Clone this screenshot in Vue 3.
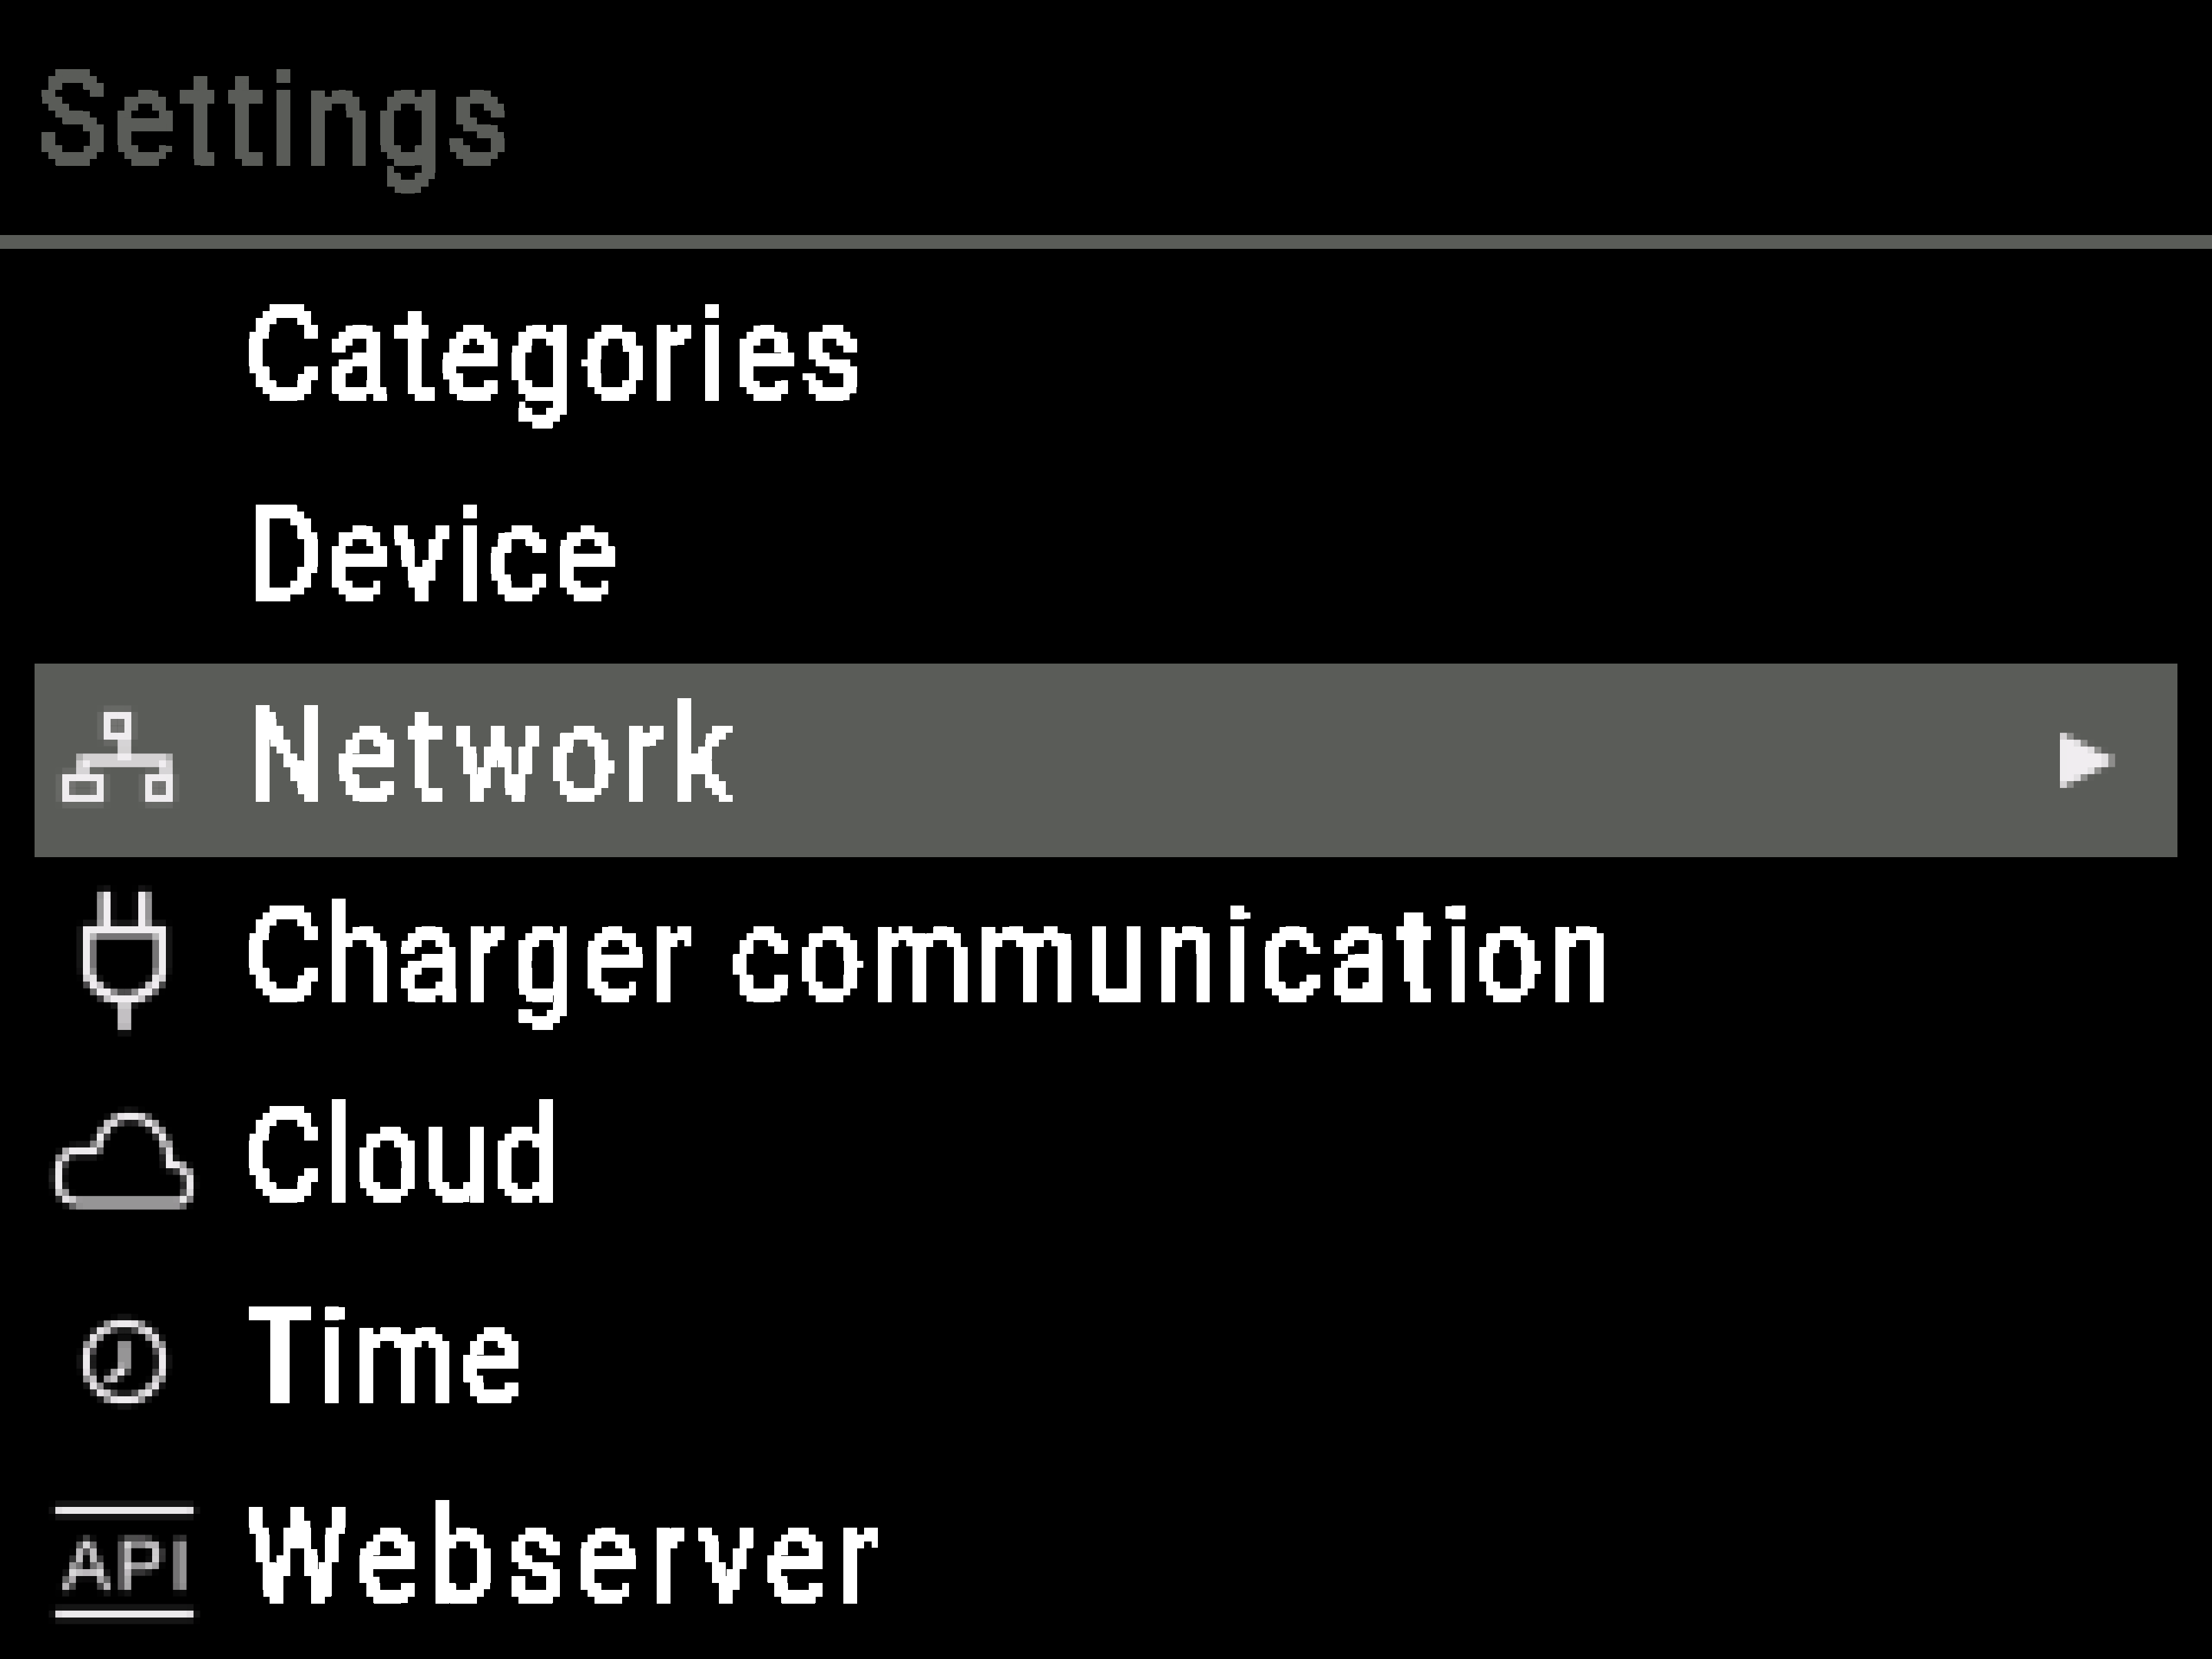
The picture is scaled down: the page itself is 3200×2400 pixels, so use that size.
<template>
  <div class="screen">
    <!-- the panel is a 320x240 LCD drawn 10x, these filters snap everything to its pixels -->
    <svg class="defs" width="0" height="0" aria-hidden="true">
      <filter id="lcd" x="0" y="0" width="100%" height="100%" color-interpolation-filters="sRGB">
        <feFlood x="4" y="4" width="2" height="2" flood-color="#000" />
        <feComposite width="10" height="10" />
        <feTile result="grid" />
        <feComposite in="SourceGraphic" in2="grid" operator="in" />
        <feMorphology operator="dilate" radius="4" />
        <feComponentTransfer>
          <feFuncA type="discrete" tableValues="0 1" />
        </feComponentTransfer>
      </filter>
      <filter id="lcd-soft" x="0" y="0" width="100%" height="100%" color-interpolation-filters="sRGB">
        <feGaussianBlur in="SourceGraphic" stdDeviation="3" result="blurred" />
        <feFlood x="4" y="4" width="2" height="2" flood-color="#000" />
        <feComposite width="10" height="10" />
        <feTile result="grid" />
        <feComposite in="blurred" in2="grid" operator="in" />
        <feMorphology operator="dilate" radius="4" />
        <feComponentTransfer>
          <feFuncA type="linear" slope="1.12" />
        </feComponentTransfer>
      </filter>
    </svg>

    <header class="header">
      <span class="label">
        <span class="glyphs" :style="{ letterSpacing: titleTracking + 'px' }">Settings</span>
      </span>
    </header>

    <ul class="menu">
      <li
        v-for="item in items"
        :key="item.label"
        :class="['row', { selected: item.selected }]"
      >
        <div class="icon-cell">
          <svg v-if="item.icon" class="icon" viewBox="0 0 30 28" width="300" height="280">
            <g v-if="item.icon === 'network'">
              <rect x="10.5" y="7.5" width="3" height="3" />
              <rect x="4.5" y="16.5" width="5" height="3" />
              <rect x="16.5" y="16.5" width="3" height="3" />
              <path d="M13 11V14M7 16V14H19V16" stroke-width="1.3" />
            </g>
            <g v-else-if="item.icon === 'plug'">
              <path
                d="M10.2 4V9.7M15.8 4V9.7M7.7 9.7H18.3V15C18.3 17.5 15.5 19.5 13 19.5C10.5 19.5 7.7 17.5 7.7 15Z"
                stroke-width="1.4"
              />
              <path d="M13 19.5V24" stroke-width="1.3" />
            </g>
            <path
              v-else-if="item.icon === 'cloud'"
              d="M6.5 20H20.8C21.8 20 22.4 19 22.4 17.2C22.4 15.5 21.5 14.5 19.5 14.5C19.5 10 16.5 7.5 13.8 7.5C11.5 7.5 9.8 9 8.8 12.5H6C4 12.5 3.4 14.5 3.4 16.5C3.4 18.8 4.8 20 6.5 20Z"
            />
            <g v-else-if="item.icon === 'clock'">
              <circle cx="13" cy="14" r="5.5" />
              <path d="M13 11V15L10.5 16.8" />
            </g>
            <g v-else-if="item.icon === 'api'">
              <path d="M3 6.5H23M3 21.5H23" />
              <text class="api-text" x="4" y="18">API</text>
            </g>
          </svg>
        </div>
        <span class="label">
          <span class="glyphs" :style="{ letterSpacing: item.tracking + 'px' }">{{ item.label }}</span>
        </span>
        <svg v-if="item.selected" class="arrow" viewBox="0 0 8 8" width="80" height="80">
          <path d="M0 0L8 4L0 8Z" />
        </svg>
      </li>
    </ul>
  </div>
</template>

<script setup>
// tracking: Roboto squeezed to the device font's proportions, fitted per label
const titleTracking = 11.9;
const items = [
  { label: "Categories", tracking: 11.7 },
  { label: "Device", tracking: 10.3 },
  { label: "Network", icon: "network", selected: true, tracking: 15.8 },
  { label: "Charger communication", icon: "plug", tracking: 11.6 },
  { label: "Cloud", icon: "cloud", tracking: 6.3 },
  { label: "Time", icon: "clock", tracking: 10.5 },
  { label: "Webserver", icon: "api", tracking: 19 },
];
</script>

<style scoped>
.screen {
  width: 3200px;
  height: 2400px;
  background: #000;
  color: #fff;
  font-family: "Liberation Sans", Arial, sans-serif;
  overflow: hidden;
}

.defs {
  position: absolute;
}

.header {
  height: 300px;
  padding: 40px 0 0 50px;
  border-bottom: 20px solid #5a5c58;
  color: #5a5c58;
}

.label {
  display: block;
  font-family: Roboto, "Liberation Sans", sans-serif;
  font-size: 188px;
  line-height: 265px;
  white-space: nowrap;
  -webkit-text-stroke: 5px currentColor;
  filter: url(#lcd);
}

.glyphs {
  display: inline-block;
  margin-left: 6px;
  transform: scaleX(0.88);
  transform-origin: 0 0;
}

.menu {
  list-style: none;
  margin: 20px 50px 0;
  padding: 0;
  display: flex;
  flex-direction: column;
  gap: 10px;
}

.row {
  height: 280px;
  display: flex;
}

.row.selected {
  background: #5a5c58;
}

.row .label {
  flex: 1;
}

.icon-cell {
  width: 300px;
  flex: none;
}

.icon {
  display: block;
  fill: none;
  stroke: #f0edf0;
  stroke-width: 1;
  filter: url(#lcd-soft);
}

.api-text {
  fill: #d8d6d8;
  stroke: none;
  font-family: "Liberation Sans", Arial, sans-serif;
  font-size: 10.5px;
  letter-spacing: 0.8px;
}

.arrow {
  flex: none;
  align-self: center;
  margin-right: 90px;
  fill: #f0edf0;
  filter: url(#lcd-soft);
}
</style>

<style>
body {
  background: #000;
}
</style>
